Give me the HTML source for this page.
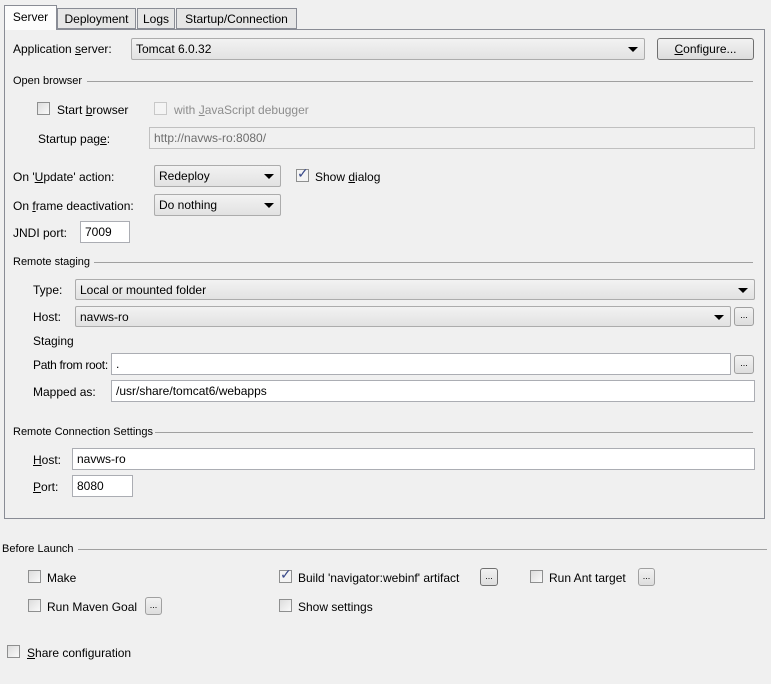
<!DOCTYPE html>
<html><head><style>
body{margin:0;width:771px;height:684px;background:#f0f0f0;font-family:"Liberation Sans",sans-serif;font-size:12px;color:#000;position:relative;overflow:hidden}
.a{position:absolute;white-space:nowrap}
.t{position:absolute;line-height:14px;white-space:nowrap}
.s{font-size:11px}
.line{position:absolute;height:1px;background:#a0a0a0}
.cb{position:absolute;width:11px;height:11px;border:1px solid #8e8f8f;background:linear-gradient(135deg,#dcdcdc,#fafafa)}
.cb.d{border-color:#c8c8c8;background:#f4f4f4}
.combo{position:absolute;border:1px solid #acacac;border-radius:2px;background:linear-gradient(#f2f2f2,#e2e2e2);box-sizing:border-box;padding-left:4px;line-height:21px}
.combo:after{content:"";position:absolute;right:6px;top:50%;margin-top:-2px;border-left:5px solid transparent;border-right:5px solid transparent;border-top:5px solid #000}
.fld{position:absolute;border:1px solid #abadb3;background:#fff;box-sizing:border-box;padding-left:4px;line-height:21px}
.btn{position:absolute;border:1px solid #707070;border-radius:3px;background:linear-gradient(#f2f2f2,#dddddd);box-sizing:border-box;text-align:center}
.sm{font-size:9px;line-height:14px}
u{text-decoration:underline}
</style></head><body>
<div class="a" style="left:57px;top:8px;width:79px;height:21px;border:1px solid #898c95;background:#e6e6e6;box-sizing:border-box;text-align:center;line-height:20px">Deployment</div>
<div class="a" style="left:137px;top:8px;width:38px;height:21px;border:1px solid #898c95;background:#e6e6e6;box-sizing:border-box;text-align:center;line-height:20px">Logs</div>
<div class="a" style="left:176px;top:8px;width:121px;height:21px;border:1px solid #898c95;background:#e6e6e6;box-sizing:border-box;text-align:center;line-height:20px">Startup/Connection</div>
<div class="a" style="left:4px;top:29px;width:761px;height:490px;border:1px solid #898c95;background:#f0f0f0;box-sizing:border-box"></div>
<div class="a" style="left:4px;top:5px;width:53px;height:25px;border:1px solid #898c95;border-bottom:none;background:#fcfcfc;box-sizing:border-box;text-align:center;line-height:22px">Server</div>

<div class="t" style="left:13px;top:42px">Application <u>s</u>erver:</div>
<div class="combo" style="left:131px;top:38px;width:514px;height:22px">Tomcat 6.0.32</div>
<div class="btn" style="left:657px;top:38px;width:97px;height:22px;line-height:20px"><u>C</u>onfigure...</div>

<div class="t s" style="left:13px;top:74px">Open browser</div>
<div class="line" style="left:87px;top:81px;width:666px"></div>
<div class="cb" style="left:37px;top:102px"></div>
<div class="t" style="left:57px;top:103px">Start <u>b</u>rowser</div>
<div class="cb d" style="left:154px;top:102px"></div>
<div class="t" style="left:174px;top:103px;color:#8d8d8d">with <u>J</u>avaScript debugger</div>
<div class="t" style="left:38px;top:132px">Startup pag<u>e</u>:</div>
<div class="fld" style="left:149px;top:127px;width:606px;height:22px;background:#f0f0f0;border-color:#c0c0c0;color:#6d6d6d">http://navws-ro:8080/</div>

<div class="t" style="left:13px;top:170px">On '<u>U</u>pdate' action:</div>
<div class="combo" style="left:154px;top:165px;width:127px;height:22px">Redeploy</div>
<div class="cb" style="left:296px;top:169px;background:#f4f4f4"></div>
<div class="a" style="left:297px;top:165px;color:#3a4a8a;font-size:14px">✓</div>
<div class="t" style="left:315px;top:170px">Show <u>d</u>ialog</div>
<div class="t" style="left:13px;top:199px">On <u>f</u>rame deactivation:</div>
<div class="combo" style="left:154px;top:194px;width:127px;height:22px">Do nothing</div>
<div class="t" style="left:13px;top:226px">JNDI port:</div>
<div class="fld" style="left:80px;top:221px;width:50px;height:22px">7009</div>

<div class="t s" style="left:13px;top:255px">Remote staging</div>
<div class="line" style="left:94px;top:262px;width:659px"></div>
<div class="t" style="left:33px;top:283px">Type:</div>
<div class="combo" style="left:75px;top:279px;width:680px;height:21px;line-height:20px">Local or mounted folder</div>
<div class="t" style="left:33px;top:310px">Host:</div>
<div class="combo" style="left:75px;top:306px;width:656px;height:21px;line-height:20px">navws-ro</div>
<div class="btn sm" style="left:734px;top:307px;width:20px;height:19px;border-color:#a0a0a0">...</div>
<div class="t" style="left:33px;top:334px">Staging</div>
<div class="t" style="left:33px;top:358px;letter-spacing:-0.3px">Path from root:</div>
<div class="fld" style="left:111px;top:353px;width:620px;height:22px">.</div>
<div class="btn sm" style="left:734px;top:355px;width:20px;height:19px;border-color:#a0a0a0">...</div>
<div class="t" style="left:33px;top:385px">Mapped as:</div>
<div class="fld" style="left:111px;top:380px;width:644px;height:22px">/usr/share/tomcat6/webapps</div>

<div class="t s" style="left:13px;top:425px">Remote Connection Settings</div>
<div class="line" style="left:155px;top:432px;width:598px"></div>
<div class="t" style="left:33px;top:453px"><u>H</u>ost:</div>
<div class="fld" style="left:72px;top:448px;width:683px;height:22px">navws-ro</div>
<div class="t" style="left:33px;top:480px"><u>P</u>ort:</div>
<div class="fld" style="left:72px;top:475px;width:61px;height:22px">8080</div>

<div class="t s" style="left:2px;top:542px">Before Launch</div>
<div class="line" style="left:78px;top:549px;width:689px"></div>
<div class="cb" style="left:28px;top:570px"></div>
<div class="t" style="left:47px;top:571px">Make</div>
<div class="cb" style="left:279px;top:570px;background:#f4f4f4"></div>
<div class="a" style="left:280px;top:566px;color:#3a4a8a;font-size:14px">✓</div>
<div class="t" style="left:298px;top:571px">Build 'navigator:webinf' artifact</div>
<div class="btn sm" style="left:480px;top:568px;width:18px;height:18px;border-color:#707070">...</div>
<div class="cb" style="left:530px;top:570px"></div>
<div class="t" style="left:549px;top:571px">Run Ant target</div>
<div class="btn sm" style="left:638px;top:568px;width:17px;height:18px;border-color:#a0a0a0">...</div>
<div class="cb" style="left:28px;top:599px"></div>
<div class="t" style="left:47px;top:600px">Run Maven Goal</div>
<div class="btn sm" style="left:145px;top:597px;width:17px;height:18px;border-color:#a0a0a0">...</div>
<div class="cb" style="left:279px;top:599px"></div>
<div class="t" style="left:298px;top:600px">Show settings</div>
<div class="cb" style="left:7px;top:645px"></div>
<div class="t" style="left:27px;top:646px"><u>S</u>hare configuration</div>
</body></html>
